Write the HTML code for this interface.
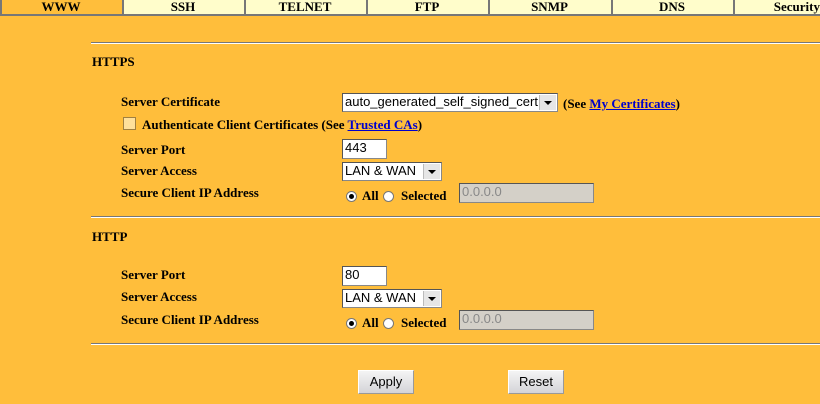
<!DOCTYPE html>
<html><head><style>
body{margin:0;width:820px;height:404px;background:#FFBE3B;position:relative;overflow:hidden;font-family:"Liberation Serif",serif;font-size:13px;font-weight:bold;color:#000}
.a{position:absolute;white-space:nowrap}
.tab{position:absolute;top:0;height:14px;background:#FFFDCB;border-bottom:2px solid #777;text-align:center;line-height:14px;font-size:13px}
.sep{position:absolute;top:0;width:2px;height:16px;background:#777}
.hr{position:absolute;left:91px;width:729px;height:1px;background:#777;border-bottom:1px solid #fff}
.inp{position:absolute;background:#fff;border:1px solid #888;border-top-color:#555;border-left-color:#555;font-family:"Liberation Sans",sans-serif;font-weight:normal;font-size:13px;line-height:16px;padding-left:2px;box-sizing:border-box}
.dis{background:#D4D0C8;color:#888}
.dd{position:absolute;top:1px;right:1px;width:16px;bottom:1px;background:#E6E6E6;border-left:1px solid #bbb}
.dd:after{content:"";position:absolute;left:4px;top:6px;border:4px solid transparent;border-top:4px solid #000;border-bottom:0}
a{color:#00c;text-decoration:underline}
.rad{position:absolute;width:11px;height:11px;border-radius:50%;background:#fff;border:1px solid #777;box-sizing:border-box}
.rad.on:after{content:"";position:absolute;left:2px;top:2px;width:5px;height:5px;border-radius:50%;background:#000}
.btn{position:absolute;background:linear-gradient(#F4F4F4,#D4D4D8);border:1px solid #999;border-top-color:#fff;border-left-color:#fff;font-family:"Liberation Sans",sans-serif;font-weight:normal;font-size:13px;text-align:center;line-height:22px;box-sizing:border-box}
</style></head><body>
<div class="tab" style="left:0;width:122px;background:#FFBE3B">WWW</div>
<div class="tab" style="left:122px;width:122px">SSH</div>
<div class="tab" style="left:244px;width:122px">TELNET</div>
<div class="tab" style="left:366px;width:122px">FTP</div>
<div class="tab" style="left:488px;width:123px">SNMP</div>
<div class="tab" style="left:611px;width:122px">DNS</div>
<div class="tab" style="left:733px;width:87px;text-align:right">Security</div>
<div class="sep" style="left:0"></div><div class="sep" style="left:122px"></div><div class="sep" style="left:244px"></div><div class="sep" style="left:366px"></div><div class="sep" style="left:488px"></div><div class="sep" style="left:611px"></div><div class="sep" style="left:733px"></div>

<div class="hr" style="top:42px"></div>
<div class="a" style="left:92px;top:54px">HTTPS</div>
<div class="a" style="left:121px;top:94px">Server Certificate</div>
<div class="inp" style="left:342px;top:93px;width:216px;height:19px">auto_generated_self_signed_cert<div class="dd"></div></div>
<div class="a" style="left:563px;top:96px">(See <a>My Certificates</a>)</div>
<div class="a" style="left:123px;top:117px;width:13px;height:13px;background:#FFE09A;border:1px solid #A08040;box-sizing:border-box"></div>
<div class="a" style="left:142px;top:117px">Authenticate Client Certificates (See <a>Trusted CAs</a>)</div>
<div class="a" style="left:121px;top:142px">Server Port</div>
<div class="inp" style="left:342px;top:139px;width:45px;height:20px">443</div>
<div class="a" style="left:121px;top:163px">Server Access</div>
<div class="inp" style="left:342px;top:162px;width:100px;height:19px">LAN &amp; WAN<div class="dd"></div></div>
<div class="a" style="left:121px;top:185px">Secure Client IP Address</div>
<div class="rad on" style="left:346px;top:191px"></div>
<div class="a" style="left:362px;top:188px">All</div>
<div class="rad" style="left:383px;top:191px"></div>
<div class="a" style="left:401px;top:188px">Selected</div>
<div class="inp dis" style="left:459px;top:183px;width:135px;height:20px">0.0.0.0</div>

<div class="hr" style="top:216px"></div>
<div class="a" style="left:92px;top:229px">HTTP</div>
<div class="a" style="left:121px;top:267px">Server Port</div>
<div class="inp" style="left:342px;top:266px;width:45px;height:20px">80</div>
<div class="a" style="left:121px;top:289px">Server Access</div>
<div class="inp" style="left:342px;top:289px;width:100px;height:19px">LAN &amp; WAN<div class="dd"></div></div>
<div class="a" style="left:121px;top:312px">Secure Client IP Address</div>
<div class="rad on" style="left:346px;top:318px"></div>
<div class="a" style="left:362px;top:315px">All</div>
<div class="rad" style="left:383px;top:318px"></div>
<div class="a" style="left:401px;top:315px">Selected</div>
<div class="inp dis" style="left:459px;top:310px;width:135px;height:20px">0.0.0.0</div>

<div class="hr" style="top:343px"></div>
<div class="btn" style="left:358px;top:370px;width:56px;height:24px">Apply</div>
<div class="btn" style="left:508px;top:370px;width:56px;height:24px">Reset</div>
</body></html>
